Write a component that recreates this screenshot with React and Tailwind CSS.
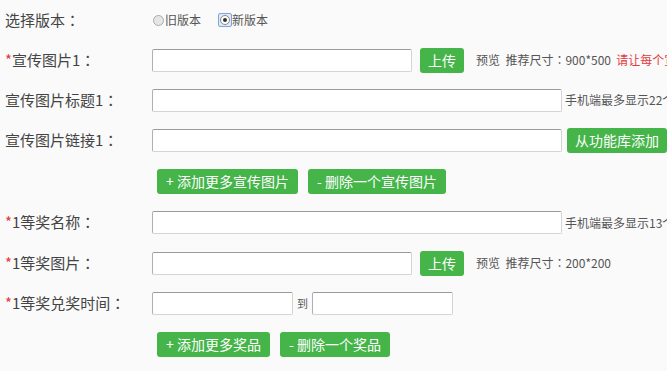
import React from "react";

const font = { fontFamily: '"Noto Sans CJK SC", "Microsoft YaHei", sans-serif' };

function Colon() {
  return <span style={{ fontFamily: '"Noto Sans CJK TC", sans-serif' }}>：</span>;
}

function Label({ req, children }) {
  return (
    <div className="w-[152px] shrink-0 pl-[5px] text-[15px] text-[#444] whitespace-nowrap">
      {req && <span className="text-[#e4393c]">*</span>}
      {children}
      <Colon />
    </div>
  );
}

function Input({ w }) {
  return (
    <div
      className={`${w} h-[23px] shrink-0 bg-white border border-[#d4d4d4] border-t-[#9a9a9a] border-l-[#b0b0b0] rounded-[2px]`}
    />
  );
}

function Btn({ children, cls = "" }) {
  return (
    <div
      className={`h-[25px] shrink-0 px-2 flex items-center justify-center bg-[#45b549] text-white text-[14px] rounded-[3px] whitespace-nowrap ${cls}`}
    >
      {children}
    </div>
  );
}

function Row({ h, children }) {
  return <div className={`${h} flex items-center`}>{children}</div>;
}

export default function App() {
  return (
    <div className="w-[667px] h-[371px] overflow-hidden bg-[#fafafa]" style={font}>
      <Row h="h-[40px]">
        <Label>选择版本</Label>
        <div className="flex items-center text-[12px] text-[#555]">
          <span className="w-[11px] h-[11px] rounded-full border border-[#aaa] bg-[#e6e6e6] ml-px" />
          <span className="ml-px">旧版本</span>
          <span className="ml-[17px] w-[14px] h-[14px] flex items-center justify-center border border-[#7ea6d8] bg-[#dfeaf7] rounded-[2px]">
            <span className="w-[10px] h-[10px] rounded-full border border-[#888] bg-white flex items-center justify-center">
              <span className="w-[4px] h-[4px] rounded-full bg-[#333]" />
            </span>
          </span>
          <span>新版本</span>
        </div>
      </Row>
      <Row h="h-[40px]">
        <Label req>宣传图片1</Label>
        <Input w="w-[260px]" />
        <Btn cls="ml-[8px]">上传</Btn>
        <span className="ml-[12px] text-[12px] text-[#555] whitespace-nowrap">
          预览&nbsp;&nbsp;推荐尺寸<Colon />900*500&nbsp;&nbsp;<span className="text-[#e4393c]">请让每个宣传图片尺寸保持一致</span>
        </span>
      </Row>
      <Row h="h-[40px]">
        <Label>宣传图片标题1</Label>
        <Input w="w-[410px]" />
        <span className="ml-[3px] text-[12px] text-[#555] whitespace-nowrap">手机端最多显示22个字</span>
      </Row>
      <Row h="h-[41px]">
        <Label>宣传图片链接1</Label>
        <Input w="w-[410px]" />
        <Btn cls="ml-[5px]">从功能库添加</Btn>
      </Row>
      <Row h="h-[41px]">
        <div className="w-[157px] shrink-0" />
        <Btn cls="px-[9px]">+&nbsp;添加更多宣传图片</Btn>
        <Btn cls="ml-[10px] px-[9px]">-&nbsp;删除一个宣传图片</Btn>
      </Row>
      <Row h="h-[41px]">
        <Label req>1等奖名称</Label>
        <Input w="w-[410px]" />
        <span className="ml-[3px] text-[12px] text-[#555] whitespace-nowrap">手机端最多显示13个字</span>
      </Row>
      <Row h="h-[40px]">
        <Label req>1等奖图片</Label>
        <Input w="w-[260px]" />
        <Btn cls="ml-[8px]">上传</Btn>
        <span className="ml-[12px] text-[12px] text-[#555] whitespace-nowrap">
          预览&nbsp;&nbsp;推荐尺寸<Colon />200*200
        </span>
      </Row>
      <Row h="h-[41px]">
        <Label req>1等奖兑奖时间</Label>
        <Input w="w-[141px]" />
        <span className="mx-[4px] text-[11px] text-[#555]">到</span>
        <Input w="w-[141px]" />
      </Row>
      <Row h="h-[41px]">
        <div className="w-[157px] shrink-0" />
        <Btn cls="px-[9px]">+&nbsp;添加更多奖品</Btn>
        <Btn cls="ml-[10px] px-[9px]">-&nbsp;删除一个奖品</Btn>
      </Row>
    </div>
  );
}
